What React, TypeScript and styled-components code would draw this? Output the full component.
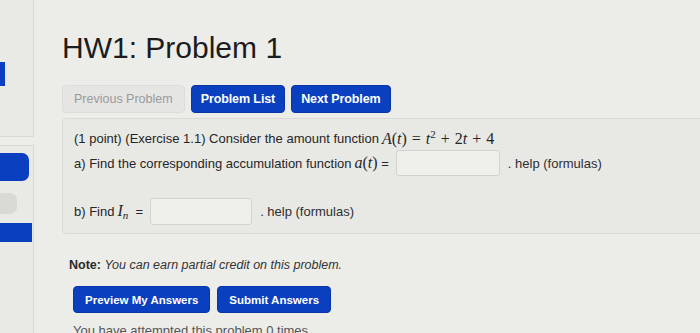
import styled, { createGlobalStyle } from "styled-components";

const GlobalStyle = createGlobalStyle`
  html, body {
    margin: 0;
    height: 333px;
    overflow: hidden;
    background: #ecece9;
    font-family: "Liberation Sans", Arial, sans-serif;
    color: #262626;
  }
`;

const Page = styled.div`
  display: flex;
  height: 333px;
`;

const Sidebar = styled.div`
  width: 34px;
  flex-shrink: 0;
  display: flex;
  flex-direction: column;
  gap: 8px;
`;

const SidePanel = styled.div<{ $top?: boolean }>`
  box-sizing: border-box;
  background: #e9e9e6;
  border-right: 1px solid #dadad7;
  ${(p) =>
    p.$top
      ? `height: 137px; border-bottom: 1px solid #dadad7; padding-top: 62px;`
      : `flex: 1; border-top: 1px solid #dadad7; padding-top: 7px;`}
  display: flex;
  flex-direction: column;
`;

const SideBlock = styled.div<{ $w: number; $h: number; $gray?: boolean; $round?: boolean; $mt?: number }>`
  width: ${(p) => p.$w}px;
  height: ${(p) => p.$h}px;
  margin-top: ${(p) => p.$mt ?? 0}px;
  background: ${(p) => (p.$gray ? "#d9d9d6" : "#0a3fbf")};
  border-radius: ${(p) => (p.$round ? "0 7px 7px 0" : "0")};
`;

const Main = styled.div`
  flex: 1;
  padding-left: 28px;
  min-width: 0;
`;

const Title = styled.h1`
  margin: 0;
  padding-top: 30px;
  font-size: 30px;
  line-height: 35px;
  font-weight: 400;
  color: #1c1c1c;
`;

const NavRow = styled.div`
  display: flex;
  gap: 6px;
  margin-top: 20px;
`;

const Button = styled.button<{ $disabled?: boolean; $small?: boolean }>`
  box-sizing: border-box;
  height: ${(p) => (p.$small ? 27 : 28)}px;
  padding: 0 ${(p) => (p.$disabled ? 11 : p.$small ? 11 : 9)}px;
  border-radius: 4px;
  font-family: "Liberation Sans", Arial, sans-serif;
  font-size: ${(p) => (p.$small ? 11.5 : 12.5)}px;
  font-weight: ${(p) => (p.$disabled ? 400 : 700)};
  letter-spacing: ${(p) => (p.$disabled || p.$small ? 0 : -0.1)}px;
  color: ${(p) => (p.$disabled ? "#9b9b9b" : "#ffffff")};
  background: ${(p) => (p.$disabled ? "#e5e5e3" : "#0a3fbf")};
  border: 1px solid ${(p) => (p.$disabled ? "#dcdcda" : "#0836a6")};
`;

const ProblemBox = styled.div`
  box-sizing: border-box;
  margin-top: 5px;
  margin-right: -10px;
  padding: 9px 11px 8px;
  background: #e8e8e5;
  border: 1px solid #d9d9d6;
  border-radius: 4px;
  font-size: 13px;
`;

const Line = styled.div<{ $mt?: number }>`
  display: flex;
  align-items: center;
  min-height: 20px;
  margin-top: ${(p) => p.$mt ?? 0}px;
  white-space: nowrap;
`;

const Math = styled.span`
  font-family: "Liberation Serif", "DejaVu Serif", serif;
  font-size: 16px;
  margin-left: 3px;
`;

const Var = styled.i`
  font-style: italic;
`;

const Op = styled.span`
  margin: 0 5px;
`;

const Sub = styled.sub`
  font-size: 11px;
  font-style: italic;
  vertical-align: -3px;
`;

const Sup = styled.sup`
  font-size: 11px;
  vertical-align: 6px;
`;

const AnswerInput = styled.input<{ $w: number; $h: number }>`
  box-sizing: border-box;
  width: ${(p) => p.$w}px;
  height: ${(p) => p.$h}px;
  margin: 0 8px 0 7px;
  background: #efefec;
  border: 1px solid #d2d2cf;
  border-radius: 3px;
`;

const Help = styled.span`
  color: #2e2e2e;
`;

const Note = styled.p`
  margin: 23px 0 0 7px;
  font-size: 12.5px;
  line-height: 16px;
  color: #2a2a2a;
  b {
    font-weight: 700;
  }
  i {
    font-style: italic;
    color: #333;
  }
`;

const SubmitRow = styled.div`
  display: flex;
  gap: 7px;
  margin: 13px 0 0 11px;
`;

const Attempts = styled.p`
  margin: 10px 0 0 11px;
  font-size: 13px;
  line-height: 16px;
  color: #555;
`;

export default function App() {
  return (
    <Page>
      <GlobalStyle />
      <Sidebar>
        <SidePanel $top>
          <SideBlock $w={5} $h={24} />
        </SidePanel>
        <SidePanel>
          <SideBlock $w={29} $h={28} $round />
          <SideBlock $w={17} $h={21} $gray $round $mt={12} />
          <SideBlock $w={32} $h={19} $mt={9} />
        </SidePanel>
      </Sidebar>
      <Main>
        <Title>HW1: Problem 1</Title>
        <NavRow>
          <Button $disabled>Previous Problem</Button>
          <Button>Problem List</Button>
          <Button>Next Problem</Button>
        </NavRow>
        <ProblemBox>
          <Line>
            (1 point) (Exercise 1.1) Consider the amount function
            <Math>
              <Var>A</Var>(<Var>t</Var>)<Op>=</Op>
              <Var>t</Var>
              <Sup>2</Sup>
              <Op>+</Op>2<Var>t</Var>
              <Op>+</Op>4
            </Math>
          </Line>
          <Line $mt={2}>
            a) Find the corresponding accumulation function
            <Math>
              <Var>a</Var>(<Var>t</Var>)
            </Math>
            &nbsp;=
            <AnswerInput $w={104} $h={26} />
            <Help>. help (formulas)</Help>
          </Line>
          <Line $mt={22}>
            b) Find
            <Math>
              <Var>I</Var>
              <Sub>n</Sub>
            </Math>
            &nbsp;&nbsp;=
            <AnswerInput $w={102} $h={27} />
            <Help>. help (formulas)</Help>
          </Line>
        </ProblemBox>
        <Note>
          <b>Note:</b> <i>You can earn partial credit on this problem.</i>
        </Note>
        <SubmitRow>
          <Button $small>Preview My Answers</Button>
          <Button $small>Submit Answers</Button>
        </SubmitRow>
        <Attempts>You have attempted this problem 0 times.</Attempts>
      </Main>
    </Page>
  );
}
